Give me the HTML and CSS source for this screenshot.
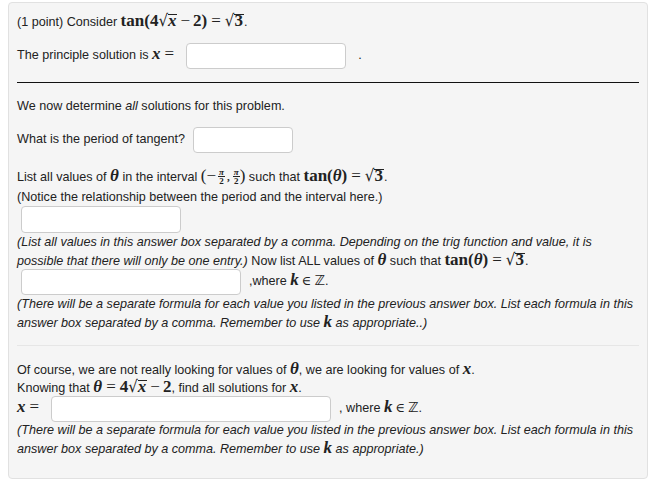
FILE: index.html
```html
<!DOCTYPE html>
<html>
<head>
<meta charset="utf-8">
<link rel="stylesheet" href="styles.css">
</head>
<body>
<div class="panel">
  <p class="blk">(1 point) Consider <span class="m"><span class="b">tan(4</span><span class="sq"><span class="rs">√</span><span class="rb"><span class="v">x</span></span></span><span class="op">−</span><span class="b">2)</span><span class="eq">=</span><span class="sq"><span class="rs">√</span><span class="rb"><span class="b">3</span></span></span></span>.</p>

  <div class="row r1">
    <span class="t">The principle solution is <span class="m"><span class="v">x</span><span class="eq">=</span></span></span>
    <span class="ans w160"></span>
    <span class="t dot">.</span>
  </div>

  <hr class="rule-dark">

  <p class="blk gap14">We now determine <i>all</i> solutions for this problem.</p>

  <div class="row r2">
    <span class="t">What is the period of tangent?</span>
    <span class="ans w100"></span>
  </div>

  <div class="gap14">
    <p class="tall">List all values of <span class="m"><span class="v">θ</span></span> in the interval <span class="m"><span class="p">(</span><span class="neg">−</span><span class="frac"><span class="num">π</span><span class="den">2</span></span><span class="cm">,</span><span class="frac"><span class="num">π</span><span class="den">2</span></span><span class="p">)</span></span> such that <span class="m"><span class="b">tan(</span><span class="v">θ</span><span class="b">)</span><span class="eq">=</span><span class="sq"><span class="rs">√</span><span class="rb"><span class="b">3</span></span></span></span>.</p>
    <p class="blk">(Notice the relationship between the period and the interval here.)</p>
  </div>

  <div class="row r3">
    <span class="ans w160 h27"></span>
  </div>

  <div>
    <p class="blk"><i>(List all values in this answer box separated by a comma. Depending on the trig function and value, it is</i></p>
    <p class="blk"><i>possible that there will only be one entry.)</i> Now list ALL values of <span class="m"><span class="v">θ</span></span> such that <span class="m"><span class="b">tan(</span><span class="v">θ</span><span class="b">)</span><span class="eq">=</span><span class="sq"><span class="rs">√</span><span class="rb"><span class="b">3</span></span></span></span>.</p>
  </div>

  <div class="row r4">
    <span class="ans w220"></span>
    <span class="t">,where <span class="m"><span class="v">k</span><span class="in">∈</span><span class="zz">ℤ</span></span>.</span>
  </div>

  <div>
    <p class="blk"><i>(There will be a separate formula for each value you listed in the previous answer box. List each formula in this</i></p>
    <p class="blk"><i>answer box separated by a comma. Remember to use <span class="m"><span class="v">k</span></span> as appropriate..)</i></p>
  </div>

  <hr class="rule-light">

  <div class="gap14">
    <p class="blk">Of course, we are not really looking for values of <span class="m"><span class="v">θ</span></span>, we are looking for values of <span class="m"><span class="v">x</span></span>.</p>
    <p class="blk">Knowing that <span class="m"><span class="v">θ</span><span class="eq">=</span><span class="b">4</span><span class="sq"><span class="rs">√</span><span class="rb"><span class="v">x</span></span></span><span class="op">−</span><span class="b">2</span></span>, find all solutions for <span class="m"><span class="v">x</span></span>.</p>
  </div>

  <div class="row r5">
    <span class="t"><span class="m"><span class="v">x</span><span class="eq">=</span></span></span>
    <span class="ans w280"></span>
    <span class="t">, where <span class="m"><span class="v">k</span><span class="in">∈</span><span class="zz">ℤ</span></span>.</span>
  </div>

  <div class="up1">
    <p class="blk"><i>(There will be a separate formula for each value you listed in the previous answer box. List each formula in this</i></p>
    <p class="blk"><i>answer box separated by a comma. Remember to use <span class="m"><span class="v">k</span></span> as appropriate.)</i></p>
  </div>
</div>
</body>
</html>
```

FILE: styles.css
```css
html, body {
  margin: 0;
  padding: 0;
  background: #ffffff;
}

body {
  font-family: "Liberation Sans", Arial, sans-serif;
  font-size: 12.6px;
  line-height: 18px;
  color: #222222;
}

.panel {
  box-sizing: border-box;
  width: 640px;
  margin: 2px 0 0 8px;
  padding: 9px 8px 21px 8px;
  background: #f5f5f5;
  border: 1px solid #e1e1e1;
  border-radius: 4px;
}

p {
  margin: 0;
}

.blk {
  display: block;
  height: 18px;
  white-space: nowrap;
}

.tall {
  display: block;
  height: 21px;
  line-height: 21px;
  white-space: nowrap;
}

.gap14 {
  margin-top: 14px;
}

.up1 {
  margin-top: -1px;
}

.row {
  display: flex;
  align-items: center;
  gap: 4px;
  height: 26px;
  white-space: nowrap;
}

.r1 { margin-top: 13px; }
.r2 { margin-top: 12px; }
.r3 { height: 27px; }

.t {
  padding-bottom: 3px;
}

.dot {
  margin-left: 4px;
}

.ans {
  display: block;
  box-sizing: border-box;
  height: 26px;
  margin: 0 4px;
  background: #ffffff;
  border: 1px solid #cccccc;
  border-radius: 4px;
}

.h27 { height: 27px; }
.w100 { width: 100px; }
.w160 { width: 160px; }
.w220 { width: 220px; }
.w280 { width: 280px; }

.rule-dark {
  margin: 13px 0 0 0;
  border: 0;
  border-top: 1px solid #111111;
  height: 0;
}

.rule-light {
  margin: 14px 0 0 0;
  border: 0;
  border-top: 1px solid #e6e6e6;
  height: 0;
}

/* math */
.m {
  font-family: "Liberation Serif", "DejaVu Serif", serif;
  font-size: 17px;
  line-height: 1;
  color: #222222;
  font-style: normal;
}

.b {
  font-weight: bold;
}

.v {
  font-weight: bold;
  font-style: italic;
}

.op {
  margin: 0 3px;
}

.eq {
  margin: 0 4px;
}

.neg {
  margin: 0 2px 0 0;
}

.p {
  font-weight: normal;
}

.cm {
  margin: 0 3px 0 2px;
  font-size: 11px;
  font-weight: bold;
}

.in {
  font-family: "DejaVu Serif", serif;
  font-size: 13px;
  margin: 0 3px;
}

.zz {
  font-family: "DejaVu Sans", sans-serif;
  font-size: 14px;
}

.sq {
  display: inline-block;
  white-space: nowrap;
}

.rs {
  font-family: "DejaVu Serif", serif;
  font-size: 15px;
  font-weight: normal;
  display: inline-block;
  transform: scaleY(1.1);
}

.rb {
  display: inline-block;
  line-height: 10px;
  border-top: 1px solid #222222;
  padding: 1px 1px 0 0;
}

.frac {
  display: inline-flex;
  flex-direction: column;
  align-items: center;
  vertical-align: 6px;
  font-size: 9px;
  font-weight: bold;
}

.frac .num {
  line-height: 7px;
  font-style: italic;
  border-bottom: 1px solid #222222;
  padding: 0 1px;
}

.frac .den {
  line-height: 9px;
  padding: 0 1px;
}
```
